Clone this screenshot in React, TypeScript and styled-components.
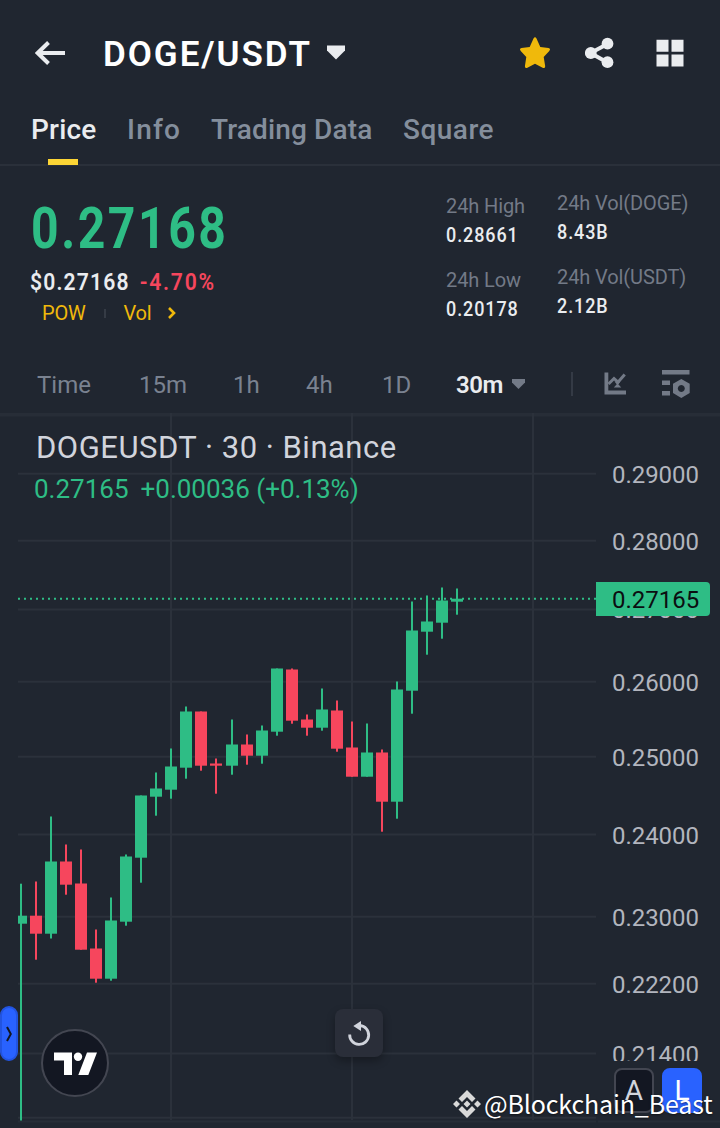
import React from "react";
import styled, { createGlobalStyle } from "styled-components";

const GREEN = "#2ebd85";
const RED = "#f6465d";
const GOLD = "#f0b90b";
const BG = "#202630";
const LIGHT = "#eaecef";
const MUTED = "#848e9c";

const Global = createGlobalStyle`
  * { box-sizing: border-box; }
  body { margin: 0; background: ${BG}; font-family: Roboto, "Liberation Sans", sans-serif; }
  svg { display: block; }
`;

const Screen = styled.main`
  width: 720px;
  height: 1128px;
  display: flex;
  flex-direction: column;
  overflow: hidden;
  background: ${BG};
  color: ${LIGHT};
`;

const Header = styled.header`
  height: 105px;
  flex: none;
  display: flex;
  align-items: center;
  padding: 0 36px 0 35px;
`;

const Pair = styled.h1`
  margin: 5px 0 0 37px;
  width: 224.5px;
  font-size: 35px;
  line-height: 42px;
  font-weight: 600;
  letter-spacing: 1.95px;
  color: #fff;
  white-space: nowrap;
`;

const PairCaret = styled.svg`
  margin: 0 0 1px -0.5px;
`;

const Actions = styled.div`
  margin-left: auto;
  display: flex;
  align-items: center;
`;

const Action = styled.span<{ $gap?: number }>`
  margin-left: ${(p) => p.$gap ?? 0}px;
`;

const Tabs = styled.nav`
  height: 61px;
  flex: none;
  display: flex;
  padding: 7px 0 0 31px;
  border-bottom: 2px solid #2a303a;
`;

const Tab = styled.span<{ $active?: boolean; $width: number; $spacing: number }>`
  width: ${(p) => p.$width}px;
  font-size: 28px;
  line-height: 36px;
  font-weight: 500;
  letter-spacing: ${(p) => p.$spacing}px;
  color: ${(p) => (p.$active ? LIGHT : MUTED)};
  white-space: nowrap;
  ${(p) =>
    p.$active &&
    `&::after {
      content: "";
      display: block;
      width: 30px;
      height: 6px;
      margin: 10.5px 0 0 17px;
      background: #fcd535;
    }`}
`;

const Summary = styled.section`
  height: 189px;
  flex: none;
  display: flex;
  padding-left: 31px;
`;

const Quote = styled.div`
  width: 415px;
  padding-top: 29px;
`;

const LastPrice = styled.div`
  height: 66px;
  font-size: 57px;
  line-height: 67px;
  font-weight: 700;
  letter-spacing: 3px;
  transform: scaleX(0.845);
  transform-origin: 0 0;
  color: ${GREEN};
`;

const Change = styled.div`
  display: flex;
  gap: 11.5px;
  margin: 7px 0 0 -1px;
  font-size: 24px;
  line-height: 28px;
  font-weight: 600;
  letter-spacing: 1.3px;
  white-space: nowrap;
  transform: scaleX(0.88);
  transform-origin: 0 0;
`;

const Negative = styled.span`
  color: ${RED};
  letter-spacing: 2px;
`;

const Tags = styled.div`
  display: flex;
  align-items: center;
  margin: 5px 0 0 11px;
  font-size: 20px;
  line-height: 24px;
  letter-spacing: -0.2px;
  color: ${GOLD};
`;

const TagRule = styled.i`
  width: 2px;
  height: 9px;
  margin: 0 18px;
  background: #353b45;
`;

const TagArrow = styled.svg`
  margin-left: 16px;
`;

const StatColumn = styled.div<{ $top: number; $width: number }>`
  width: ${(p) => p.$width}px;
  padding-top: ${(p) => p.$top}px;
`;

const Stat = styled.div`
  height: 74px;
  white-space: nowrap;
`;

const StatLabel = styled.div`
  font-size: 20px;
  line-height: 28px;
  letter-spacing: -0.1px;
  color: #737a87;
`;

const StatValue = styled.div`
  font-size: 20px;
  line-height: 30px;
  font-weight: 500;
  letter-spacing: 1px;
  transform: scaleX(0.9);
  transform-origin: 0 0;
`;

const Intervals = styled.div`
  height: 58px;
  flex: none;
  display: flex;
  align-items: center;
  padding: 0 0 1px 37px;
`;

const Interval = styled.span<{ $width: number; $active?: boolean }>`
  width: ${(p) => p.$width}px;
  padding-top: 3px;
  font-size: 24px;
  line-height: 30px;
  font-weight: ${(p) => (p.$active ? 600 : 400)};
  letter-spacing: ${(p) => (p.$active ? -0.4 : 0)}px;
  color: ${(p) => (p.$active ? LIGHT : "#7a8290")};
`;

const Divider = styled.i`
  width: 2px;
  height: 24px;
  margin: 0 31px 0 46px;
  background: #343a45;
`;

const Tools = styled.div`
  display: flex;
  align-items: center;
  gap: 35px;
`;

const Chart = styled.section`
  position: relative;
  flex: 1;
`;

const Legend = styled.div`
  position: absolute;
  left: 36px;
  top: 17px;
  white-space: nowrap;
`;

const LegendTitle = styled.div`
  font-size: 31px;
  line-height: 36px;
  letter-spacing: 0.5px;
  color: #d1d4dc;
`;

const LegendValues = styled.div`
  display: flex;
  gap: 12px;
  margin: 8px 0 0 -2px;
  font-size: 26px;
  line-height: 30px;
  color: ${GREEN};
`;

const PriceTag = styled.div`
  position: absolute;
  left: 596px;
  top: 169px;
  width: 114px;
  height: 34px;
  padding-left: 16px;
  border-radius: 0 4px 4px 0;
  background: ${GREEN};
  color: #0b0e11;
  font-size: 24px;
  line-height: 36px;
`;

const DrawerHandle = styled.button`
  position: absolute;
  left: 0;
  top: 593px;
  width: 18px;
  height: 55px;
  padding: 0;
  display: grid;
  place-items: center;
  border: 2px solid #2254e0;
  border-radius: 9px;
  background: #2962ff;
`;

const Brand = styled.div`
  position: absolute;
  left: 41px;
  top: 616px;
  width: 68px;
  height: 68px;
  border: 2px solid #434651;
  border-radius: 50%;
  background: #131722;
`;

const ResetButton = styled.button`
  position: absolute;
  left: 335px;
  top: 596px;
  width: 48px;
  height: 48px;
  padding: 0;
  border: 0;
  border-radius: 8px;
  background: #2a2e39;
  box-shadow: 0 4px 8px rgba(0, 0, 0, 0.3);
`;

const ScaleButtons = styled.div`
  position: absolute;
  left: 614px;
  top: 655px;
  display: flex;
  gap: 8px;
`;

const ScaleButton = styled.button<{ $on?: boolean }>`
  width: 40px;
  height: 45px;
  padding: 0;
  border: 2px solid ${(p) => (p.$on ? "#2962ff" : "#434651")};
  border-radius: 8px;
  background: ${(p) => (p.$on ? "#2962ff" : "#131722")};
  color: ${(p) => (p.$on ? "#fff" : "#d1d4dc")};
  font: 28px/41px Roboto, sans-serif;
`;

const Watermark = styled.div`
  position: absolute;
  left: 453px;
  top: 673px;
  display: flex;
  align-items: center;
  gap: 3px;
  font-family: "Noto Sans CJK SC", "Noto Sans", sans-serif;
  font-size: 25px;
  line-height: 34px;
  letter-spacing: -0.15px;
  color: #fff;
  white-space: nowrap;
  text-shadow: 0 1px 2px rgba(0, 0, 0, 0.5);
`;

const WatermarkLogo = styled.svg`
  margin-top: 2px;
`;

// [center x, direction, body top, body bottom, wick top, wick bottom]
type Candle = [number, "u" | "d", number, number, number, number];
const candles: Candle[] = [
  [21, "u", 915.7, 923.7, 883.7, 1120.5],
  [36, "d", 915.7, 933.7, 881.5, 959.7],
  [51, "u", 861.5, 933.7, 816.5, 938.5],
  [66, "d", 861.5, 884.7, 844.5, 894.7],
  [81, "d", 883.5, 949.7, 849.5, 949.7],
  [96, "d", 948.5, 978.7, 929.5, 982.7],
  [111, "u", 920.5, 978.7, 897.5, 980.7],
  [126, "u", 856.5, 921.7, 854.5, 925.7],
  [141, "u", 795.5, 857.7, 795.5, 882.7],
  [156, "u", 788.5, 796.7, 772.5, 815.7],
  [171, "u", 766.5, 789.7, 748.5, 798.7],
  [186, "u", 711.5, 767.7, 706.5, 778.7],
  [201, "d", 711.5, 765.7, 711.5, 770.7],
  [216, "d", 763.5, 765.7, 758.5, 793.7],
  [232, "u", 744.5, 765.7, 719.5, 774.7],
  [247, "d", 744.5, 755.7, 734.5, 764.7],
  [262, "u", 730.5, 755.7, 725.5, 763.7],
  [277, "u", 668.5, 731.7, 668.5, 735.7],
  [292, "d", 669.5, 720.7, 668.5, 723.7],
  [307, "d", 719.5, 727.7, 714.5, 735.7],
  [322, "u", 709.5, 727.7, 688.5, 730.7],
  [337, "d", 710.5, 748.7, 700.5, 751.7],
  [352, "d", 747.5, 776.7, 721.5, 776.7],
  [367, "u", 752.5, 776.7, 723.5, 776.7],
  [382, "d", 752.5, 801.7, 749.5, 831.7],
  [397, "u", 689.5, 801.7, 681.5, 818.7],
  [412, "u", 630.5, 690.7, 601.5, 713.7],
  [427, "u", 621.5, 631.7, 595.5, 654.7],
  [442, "u", 600.5, 622.7, 587.5, 638.7],
  [457, "u", 598.7, 601.7, 588.5, 614.7],
];

// [line y, label baseline, label]
const levels: [number, number, string][] = [
  [473.7, 483, "0.29000"],
  [540.7, 550, "0.28000"],
  [609.5, 618, "0.27000"],
  [681.7, 691, "0.26000"],
  [756.7, 766, "0.25000"],
  [834.5, 844, "0.24000"],
  [916.7, 926, "0.23000"],
  [983.7, 993, "0.22200"],
  [1053.5, 1062.5, "0.21400"],
];

const Plot = () => (
  <svg width="720" height="715" viewBox="0 413 720 715">
    <clipPath id="axis">
      <rect x="596" y="413" width="124" height="648" />
    </clipPath>
    <clipPath id="pane">
      <rect x="18" y="413" width="578" height="708" />
    </clipPath>
    <rect x="0" y="413" width="720" height="3.5" fill="#272d37" />
    <g fill="#2b313b">
      {levels.map(([y]) => (
        <rect key={y} x="18" y={y - 1} width="578" height="2" />
      ))}
      <rect x="18" y="1116.7" width="578" height="2" />
      {[170, 351, 532].map((x) => (
        <rect key={x} x={x} y="413" width="2" height="707" />
      ))}
    </g>
    <rect x="18" y="1120.5" width="578" height="2" fill="#272d37" />
    <rect x="598" y="1120.5" width="122" height="2" fill="#272d37" />
    <path d="M18 598.8H596" stroke={GREEN} strokeWidth="2" strokeDasharray="2 4" />
    <g clipPath="url(#pane)">
      {candles.map(([x, dir, top, bottom, high, low]) => (
        <g key={x} fill={dir === "u" ? GREEN : RED}>
          <rect x={x - 1} y={high} width="2" height={low - high} />
          <rect x={x - 6} y={top} width="12" height={bottom - top} />
        </g>
      ))}
    </g>
    <g clipPath="url(#axis)" fill="#b2b5be" fontFamily="Roboto, sans-serif" fontSize="24">
      {levels.map(([, baseline, label]) => (
        <text key={label} x="612" y={baseline} textLength="87">
          {label}
        </text>
      ))}
    </g>
  </svg>
);

const BackIcon = () => (
  <svg width="31" height="26" viewBox="0.5 0 31 26" fill="none" stroke={LIGHT} strokeWidth="4">
    <path d="M3 13H30.500M14 2.500L3.200 13L14 23.500" />
  </svg>
);

const StarIcon = () => (
  <svg width="30" height="32" viewBox="0 0 30 32" fill={GOLD}>
    <path d="M13.500 1.600q1.500-2.600 3 0l3.800 8.400 8.200 1q2.600.6.8 2.900l-5.600 6.100 1.500 9.200q-.1 2.600-2.600 1.600L15 26.800l-7.600 4q-2.300.9-2.500-1.600L6.300 20 .7 13.900q-1.800-2.300.8-2.900l8.200-1z" />
  </svg>
);

const ShareIcon = () => (
  <svg width="30" height="32" viewBox="0.5 0 30 32" fill={LIGHT}>
    <path d="M23 7L6 16L23 25.500" fill="none" stroke={LIGHT} strokeWidth="4" />
    <circle cx="6.300" cy="16" r="5.900" />
    <circle cx="23" cy="6.700" r="5.900" />
    <circle cx="23" cy="25.200" r="5.900" />
  </svg>
);

const GridIcon = () => (
  <svg width="28" height="28" viewBox="0 0 28 28" fill={LIGHT}>
    <path d="M.5.7h12v12H.5zM15.500.7h12v12h-12zM.5 15.500h12v12H.5zM15.500 15.500h12v12h-12z" />
  </svg>
);

const IndicatorIcon = () => (
  <svg width="23" height="23" viewBox="0 0 23 23" fill="#737a87">
    <path d="M.5.5h3.800v18H22v4H.5z" />
    <path d="M4.500 12L10 6.500L14 10.200L20.700 2.500" fill="none" stroke="#737a87" strokeWidth="3" />
    <path d="M10.500 9.500h6L14.300 12.200L17.300 15.500H9.800L12.700 12.200z" />
  </svg>
);

const SettingsIcon = () => (
  <svg width="28" height="30" viewBox="0 0 28 30" fill="#737a87">
    <path d="M0 1h27.500v4.500H0zM0 11.500h8V16H0zM0 22h8v4.500H0z" />
    <path
      fillRule="evenodd"
      d="M19.300 10L27.700 14.700V24L19.300 29L11 24V14.700zM19.300 16a3.500 3.500 0 1 0 .01 0z"
    />
  </svg>
);

const tabs: [string, number, number][] = [
  ["Price", 96, 0.2],
  ["Info", 84, 1.2],
  ["Trading Data", 192, 0.15],
  ["Square", 100, 0.5],
];

export default function App() {
  return (
    <Screen>
      <Global />
      <Header>
        <BackIcon />
        <Pair>DOGE/USDT</Pair>
        <PairCaret width="18" height="15" viewBox="0 0 18 15" fill={LIGHT}>
          <path d="M0 .5H18V5.500L9 14.500L0 5.500z" />
        </PairCaret>
        <Actions>
          <Action>
            <StarIcon />
          </Action>
          <Action $gap={35}>
            <ShareIcon />
          </Action>
          <Action $gap={41}>
            <GridIcon />
          </Action>
        </Actions>
      </Header>
      <Tabs>
        {tabs.map(([name, width, spacing], i) => (
          <Tab key={name} $active={i === 0} $width={width} $spacing={spacing}>
            {name}
          </Tab>
        ))}
      </Tabs>
      <Summary>
        <Quote>
          <LastPrice>0.27168</LastPrice>
          <Change>
            <span>$0.27168</span>
            <Negative>-4.70%</Negative>
          </Change>
          <Tags>
            <span>POW</span>
            <TagRule />
            <span>Vol</span>
            <TagArrow width="8" height="12" viewBox="0 0 8 12" fill="none" stroke={GOLD} strokeWidth="2.6">
              <path d="M1 1L6 6L1 11" />
            </TagArrow>
          </Tags>
        </Quote>
        <StatColumn $top={26} $width={111}>
          <Stat>
            <StatLabel>24h High</StatLabel>
            <StatValue>0.28661</StatValue>
          </Stat>
          <Stat>
            <StatLabel>24h Low</StatLabel>
            <StatValue>0.20178</StatValue>
          </Stat>
        </StatColumn>
        <StatColumn $top={23} $width={150}>
          <Stat>
            <StatLabel>24h Vol(DOGE)</StatLabel>
            <StatValue>8.43B</StatValue>
          </Stat>
          <Stat>
            <StatLabel>24h Vol(USDT)</StatLabel>
            <StatValue>2.12B</StatValue>
          </Stat>
        </StatColumn>
      </Summary>
      <Intervals>
        <Interval $width={102}>Time</Interval>
        <Interval $width={94}>15m</Interval>
        <Interval $width={73}>1h</Interval>
        <Interval $width={76}>4h</Interval>
        <Interval $width={74}>1D</Interval>
        <Interval $width={56} $active>
          30m
        </Interval>
        <svg width="13" height="10" viewBox="0 0 13 10" fill="#737a87">
          <path d="M0 0H13V3.500L6.500 10L0 3.500z" />
        </svg>
        <Divider />
        <Tools>
          <IndicatorIcon />
          <SettingsIcon />
        </Tools>
      </Intervals>
      <Chart>
        <Plot />
        <Legend>
          <LegendTitle>DOGEUSDT · 30 · Binance</LegendTitle>
          <LegendValues>
            <span>0.27165</span>
            <span>+0.00036 (+0.13%)</span>
          </LegendValues>
        </Legend>
        <PriceTag>0.27165</PriceTag>
        <DrawerHandle>
          <svg width="6" height="16" viewBox="0 0 6 16" fill="none" stroke="#131722" strokeWidth="2">
            <path d="M1 1L4.800 8L1 15" />
          </svg>
        </DrawerHandle>
        <Brand>
          <svg width="64" height="64" viewBox="43 1031 64 64" fill="#fff">
            <path d="M54 1052.500H72V1075H64V1060.500H54zM87 1052.500H97L88.300 1075H78.300z" />
            <circle cx="78" cy="1056.700" r="4.200" />
          </svg>
        </Brand>
        <ResetButton>
          <svg width="48" height="48" viewBox="0 0 48 48">
            <path d="M14.700 25.500A9.500 9.500 0 1 0 25 16.500" fill="none" stroke="#d1d4dc" strokeWidth="2.800" />
            <path d="M26 12V22L18.300 17z" fill="#d1d4dc" />
          </svg>
        </ResetButton>
        <ScaleButtons>
          <ScaleButton>A</ScaleButton>
          <ScaleButton $on>L</ScaleButton>
        </ScaleButtons>
        <Watermark>
          <WatermarkLogo width="28" height="28" viewBox="0 0 28 28" fill="#d9d9d9">
            <path d="M14 0L22.500 8.500L19 12L14 7L9 12L5.500 8.500zM14 28L22.500 19.500L19 16L14 21L9 16L5.500 19.500zM14 10.500L17.500 14L14 17.500L10.500 14zM3.500 10.500L7 14L3.500 17.500L0 14zM24.500 10.500L28 14L24.500 17.500L21 14z" />
          </WatermarkLogo>
          <span>@Blockchain_Beast</span>
        </Watermark>
      </Chart>
    </Screen>
  );
}
